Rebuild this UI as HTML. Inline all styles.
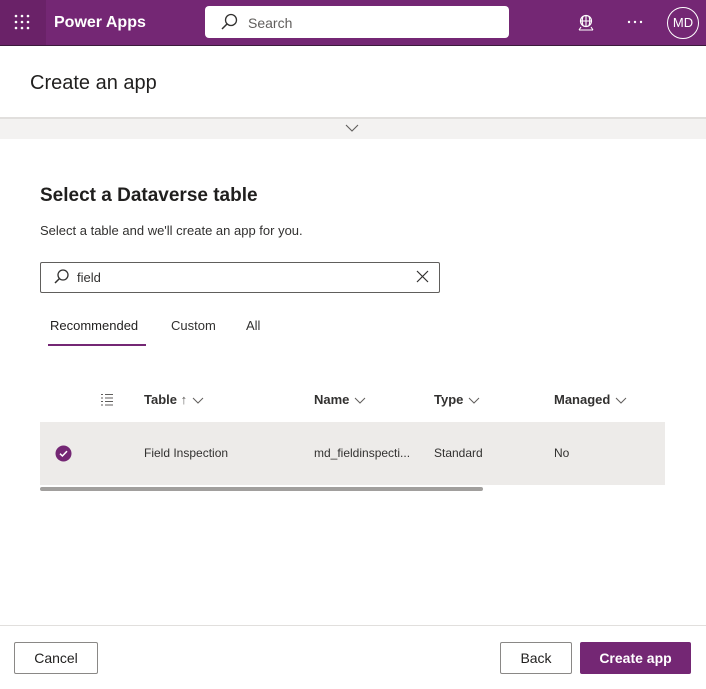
<!DOCTYPE html><html><head><style>
*{box-sizing:border-box;margin:0;padding:0}
body{width:706px;height:689px;overflow:hidden;background:#fff;font-family:"Liberation Sans",sans-serif;color:#323130;position:relative}
.a{position:absolute}
.h{font-size:13px;font-weight:bold;white-space:nowrap}
.h svg{margin-left:5px;vertical-align:middle}
</style></head><body>
<div class="a" style="left:0;top:0;width:706px;height:46px;background:#742774;border-bottom:1px solid #3b1a3b"></div>
<div class="a" style="left:0;top:0;width:46px;height:45px;background:#6a2268"></div>
<svg class="a" style="left:13px;top:13px" width="20" height="20"><g fill="#fff"><circle cx="3" cy="3" r="1.3"/><circle cx="9" cy="3" r="1.3"/><circle cx="15" cy="3" r="1.3"/><circle cx="3" cy="9" r="1.3"/><circle cx="9" cy="9" r="1.3"/><circle cx="15" cy="9" r="1.3"/><circle cx="3" cy="15" r="1.3"/><circle cx="9" cy="15" r="1.3"/><circle cx="15" cy="15" r="1.3"/></g></svg>
<div class="a" style="left:54px;top:14px;color:#fff;font-weight:bold;font-size:16px">Power Apps</div>
<div class="a" style="left:205px;top:6px;width:304px;height:32px;background:#fff;border-radius:4px"></div>
<svg class="a" style="left:220px;top:13px" width="18" height="18"><circle cx="11" cy="7" r="5.5" fill="none" stroke="#323130" stroke-width="1.3"/><line x1="7" y1="11" x2="2" y2="16" stroke="#323130" stroke-width="1.5"/></svg>
<div class="a" style="left:248px;top:15px;font-size:14px;color:#605e5c">Search</div>
<svg class="a" style="left:577px;top:14px" width="18" height="18"><circle cx="9" cy="7" r="5.5" fill="none" stroke="#fff" stroke-width="1.2"/><path d="M3.5 7h11M9 1.5v11M6 2.5q-1.5 4.5 0 9M12 2.5q1.5 4.5 0 9M2 16h14M4 13l-2 3M14 13l2 3" fill="none" stroke="#fff" stroke-width="1.1"/></svg>
<svg class="a" style="left:627px;top:20px" width="16" height="4"><g fill="#fff"><circle cx="2" cy="2" r="1.2"/><circle cx="8" cy="2" r="1.2"/><circle cx="14" cy="2" r="1.2"/></g></svg>
<div class="a" style="left:667px;top:7px;width:32px;height:32px;border:1px solid #fff;border-radius:50%;color:#fff;font-size:13px;text-align:center;line-height:30px">MD</div>
<div class="a" style="left:30px;top:72px;font-size:20px;color:#201f1e">Create an app</div>
<div class="a" style="left:0;top:117px;width:706px;height:22px;background:#f3f2f1;border-top:2px solid #e1dfdd"></div>
<svg class="a" style="left:345px;top:124px" width="14" height="9"><path d="M1 1l6 6 6-6" fill="none" stroke="#605e5c" stroke-width="1.1"/></svg>
<div class="a" style="left:40px;top:185px;font-size:19px;font-weight:bold;color:#201f1e">Select a Dataverse table</div>
<div class="a" style="left:40px;top:223px;font-size:13px">Select a table and we'll create an app for you.</div>
<div class="a" style="left:40px;top:262px;width:400px;height:31px;border:1px solid #605e5c;border-radius:2px"></div>
<svg class="a" style="left:52px;top:268px" width="18" height="18"><circle cx="11" cy="7" r="5" fill="none" stroke="#323130" stroke-width="1.3"/><line x1="7.5" y1="10.5" x2="3" y2="15" stroke="#323130" stroke-width="1.5"/></svg>
<div class="a" style="left:77px;top:270px;font-size:13px">field</div>
<svg class="a" style="left:416px;top:270px" width="13" height="13"><path d="M1 1l11 11M12 1L1 12" stroke="#323130" stroke-width="1.2"/></svg>
<div class="a" style="left:50px;top:318px;font-size:13px;color:#201f1e">Recommended</div>
<div class="a" style="left:48px;top:344px;width:98px;height:2px;background:#742774"></div>
<div class="a" style="left:171px;top:318px;font-size:13px">Custom</div>
<div class="a" style="left:246px;top:318px;font-size:13px">All</div>
<svg class="a" style="left:100px;top:393px" width="14" height="14"><g stroke="#605e5c" stroke-width="1"><path d="M1 1.5h2M1 5h2M1 8.5h2M1 12h2M5 1.5h8M5 5h8M5 8.5h8M5 12h8"/></g></svg>
<div class="a h" style="left:144px;top:392px">Table <span style="font-weight:normal;color:#605e5c">↑</span><svg width="12" height="7"><path d="M1 1l5 5 5-5" fill="none" stroke="#605e5c"/></svg></div>
<div class="a h" style="left:314px;top:392px">Name<svg width="12" height="7"><path d="M1 1l5 5 5-5" fill="none" stroke="#605e5c"/></svg></div>
<div class="a h" style="left:434px;top:392px">Type<svg width="12" height="7"><path d="M1 1l5 5 5-5" fill="none" stroke="#605e5c"/></svg></div>
<div class="a h" style="left:554px;top:392px">Managed<svg width="12" height="7"><path d="M1 1l5 5 5-5" fill="none" stroke="#605e5c"/></svg></div>
<div class="a" style="left:40px;top:422px;width:625px;height:63px;background:#edebe9"></div>
<svg class="a" style="left:55px;top:445px" width="17" height="17"><circle cx="8.5" cy="8.5" r="8" fill="#742774"/><path d="M5 8.7l2.4 2.3L12 6.2" fill="none" stroke="#fff" stroke-width="1.5"/></svg>
<div class="a" style="left:144px;top:446px;font-size:12px">Field Inspection</div>
<div class="a" style="left:314px;top:446px;font-size:12px">md_fieldinspecti...</div>
<div class="a" style="left:434px;top:446px;font-size:12px">Standard</div>
<div class="a" style="left:554px;top:446px;font-size:12px">No</div>
<div class="a" style="left:40px;top:487px;width:443px;height:4px;background:#a19f9d;border-radius:2px"></div>
<div class="a" style="left:0;top:625px;width:706px;height:1px;background:#e1dfdd"></div>
<div class="a" style="left:14px;top:642px;width:84px;height:32px;border:1px solid #8a8886;border-radius:2px;font-size:14px;text-align:center;line-height:30px;color:#201f1e">Cancel</div>
<div class="a" style="left:500px;top:642px;width:72px;height:32px;border:1px solid #8a8886;border-radius:2px;font-size:14px;text-align:center;line-height:30px;color:#201f1e">Back</div>
<div class="a" style="left:580px;top:642px;width:111px;height:32px;background:#742774;border-radius:2px;font-size:14px;font-weight:bold;text-align:center;line-height:32px;color:#fff">Create app</div>
</body></html>
